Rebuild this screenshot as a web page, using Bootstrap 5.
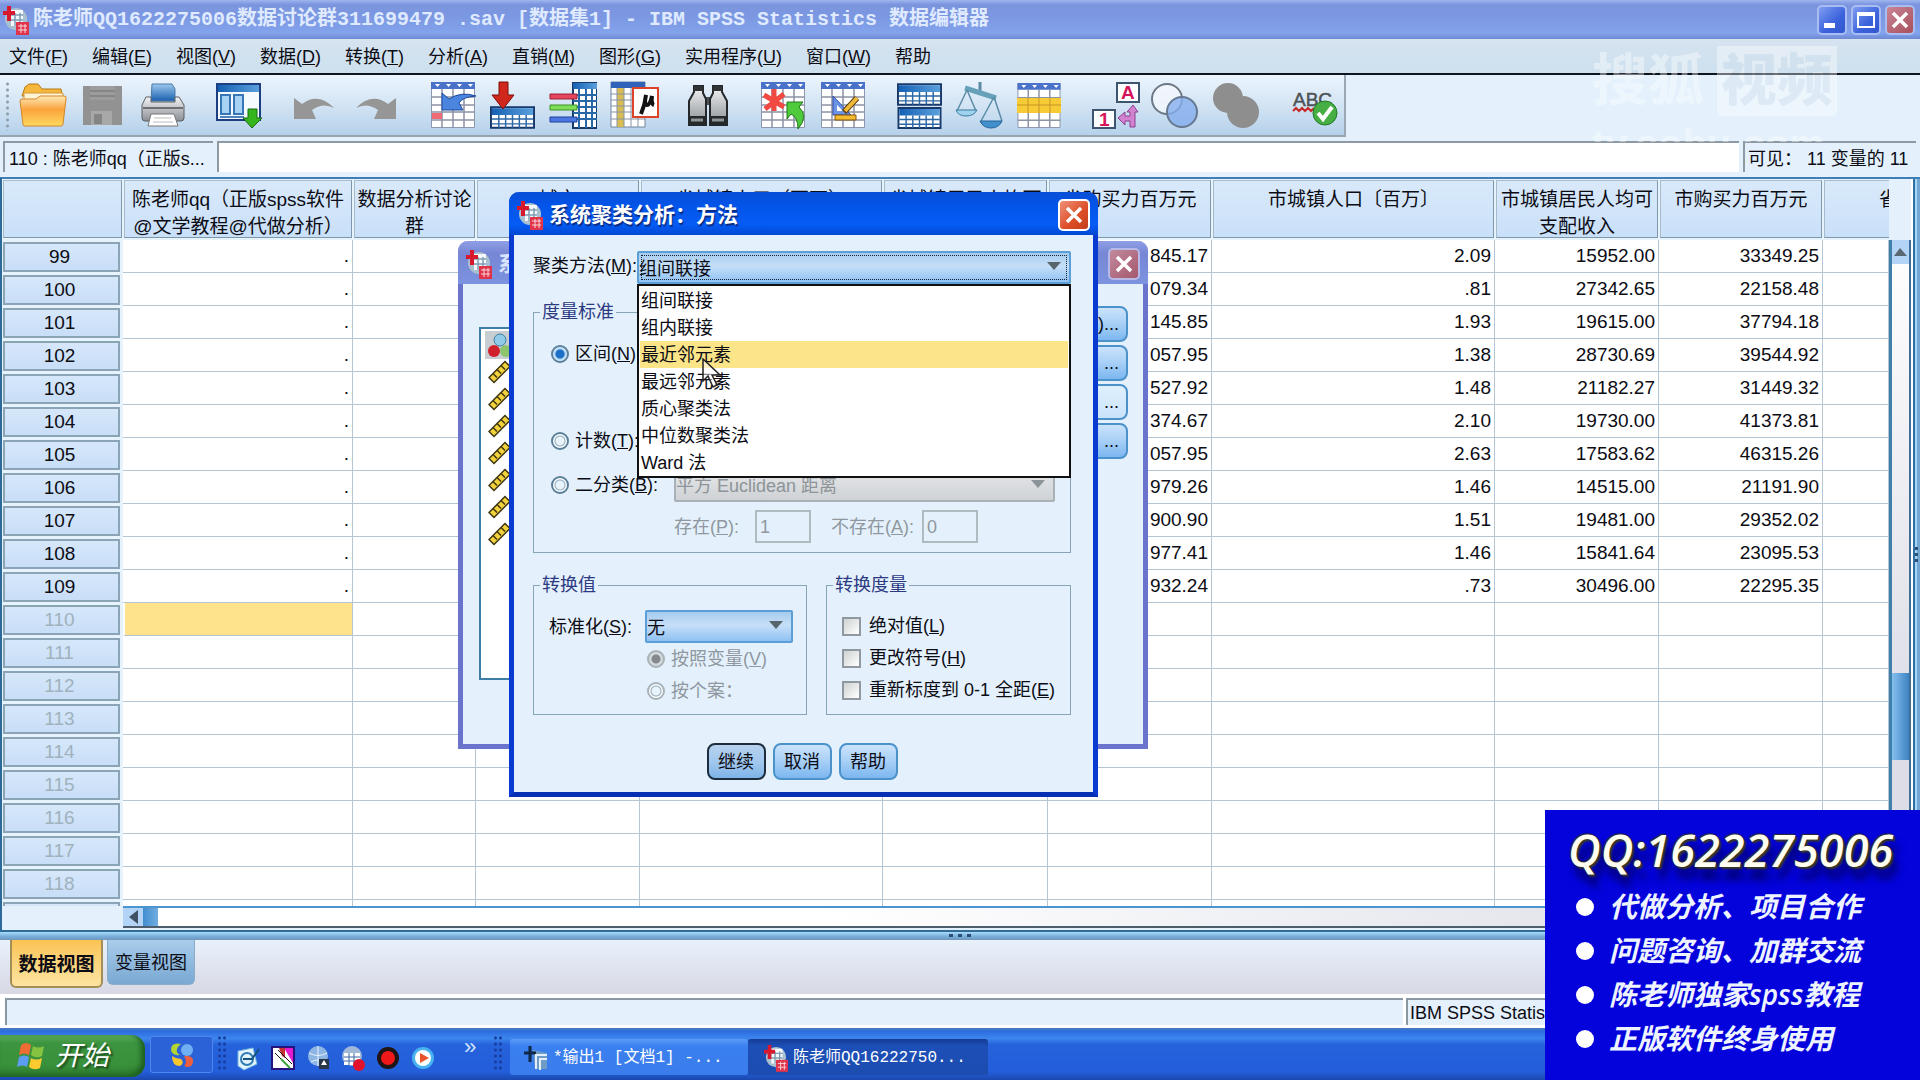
<!DOCTYPE html>
<html lang="zh-CN">
<head>
<meta charset="utf-8">
<meta name="viewport" content="width=device-width, initial-scale=1">
<title>IBM SPSS Statistics 数据编辑器</title>
<link rel="stylesheet" href="https://cdn.jsdelivr.net/npm/bootstrap@5.3.0/dist/css/bootstrap.min.css">
<style>
  :root { --pane:#e4f1fc; --line:#b4c6d3; --cell:#cfe3f9; --ui:"Liberation Sans","Noto Sans CJK SC",sans-serif; --mono:"Liberation Mono","Noto Sans CJK SC",monospace; }
  body { font-family:var(--ui); font-size:18px; line-height:24px; color:#0c0c14; background:var(--pane); height:100vh; overflow:hidden; white-space:nowrap; }
  button, input, select { font:inherit; color:inherit; }
  svg { display:block; flex:none; }

  .win-title { height:39px; background:linear-gradient(#9fb6ef 0,#7b94de 12%,#7c98e2 45%,#83a3ec 85%,#6d89d2); color:#dfeaff; font-family:var(--mono); font-size:20px; font-weight:700; padding:0 5px 0 3px; }
  .win-btn { width:30px; height:30px; padding:0; border:2px solid #a9bdf3; border-radius:5px; background:linear-gradient(135deg,#7f9df0,#3a62dc 60%,#3258cf); display:grid; place-items:center; }
  .win-close { background:linear-gradient(135deg,#c88595,#a9505c); }
  .menu-bar { height:36px; background:linear-gradient(#d6e3f0,#cde0ee); border-bottom:2px solid #10141c; padding:2px 9px 0; gap:24px; }
  .menu-bar a { color:#0c0c14; text-decoration:none; }
  .tool-strip { height:62px; width:1346px; max-width:100%; gap:28px; padding-left:19px; background:linear-gradient(#ecf5fe,#d3e4f4 50%,#b5d1ea); border-right:2px solid #9aa8b2; border-bottom:2px solid #97a5af; position:relative; }
  .tool-strip::before { content:""; position:absolute; left:6px; top:6px; bottom:4px; width:3px; background:radial-gradient(circle,#8fa0ad 1px,transparent 2px) 0 0/3px 6px; }
  .tool-group { gap:12px; }
  .tool-group button { width:48px; height:48px; padding:0; border:0; background:none; }
  .cell-line { height:31px; margin:4px 4px 5px 3px; gap:4px; }
  .cell-line > * { border:0; border-top:2px solid #8d9aa4; border-left:2px solid #8d9aa4; border-radius:0; }
  .cell-name { width:210px; padding:4px 0 0 4px; }
  .cell-edit { background:#fff; outline:0; }
  .cell-count { width:173px; padding:4px 0 0 3px; }

  .grid-area { border-top:2px solid #3f7fb5; border-left:2px solid #2b6a9a; }
  .data-grid { table-layout:fixed; width:100%; border-collapse:separate; border-spacing:0; font-size:19px; line-height:27px; background:#fff; }
  .data-grid th { font-weight:400; text-align:center; padding:1px; background:#e6f2fc; }
  .data-grid thead th { height:61px; vertical-align:top; overflow:hidden; }
  .th-box { height:58px; border:1px solid #7f98a9; border-top-color:#a7bccb; border-left-color:#a7bccb; background:linear-gradient(#d9e9fa,#c9e0f9); padding-top:5px; overflow:hidden; }
  .th-last { padding-left:54px; text-align:left; margin-right:-1px; border-right:0; }
  .data-grid tbody tr { height:33px; }
  .data-grid td { height:33px; padding:0 3px; text-align:right; border-right:1px solid var(--line); border-bottom:1px solid var(--line); line-height:32px; overflow:hidden; }
  .row-box { height:30px; border:2px solid #8ba5b7; background:linear-gradient(#d6e7fa,#c8def7); line-height:26px; margin-right:2px; padding-right:4px; }
  .row-idle { color:#9fb2bd; }
  .data-grid .picked { background:#fee38c; background-clip:padding-box; border-left:2px solid #fff; }
  .h-scroll { height:22px; margin:0 0 2px 121px; border-top:2px solid #4a94d0; border-bottom:2px solid #4c5e6c; background:linear-gradient(90deg,#fff 40%,#d9dbe4); }
  .v-scroll { width:22px; margin-top:61px; border-left:3px solid #3f7fa9; border-right:2px solid #3f6f99; background:linear-gradient(#fff,#dcdde6 70%); }
  .scroll-arrow { width:20px; background:#b3d4f7; display:grid; place-items:center; border:0; padding:0; }
  .h-thumb { width:15px; background:linear-gradient(90deg,#3f8dd0,#74aee0); }
  .v-thumb { height:87px; background:linear-gradient(90deg,#86c0ef,#3d82c0); }
  .v-before { flex:12 0 0; }
  .v-after { flex:5 0 0; }
  .v-split { width:9px; background:linear-gradient(90deg,#fff 0 2px,#2f6ea0 2px 4px,#a6d7f8 4px 6px,#72a7d4 6px); display:grid; place-items:center; }
  .h-split { height:10px; border-top:2px solid #2f6c98; background:linear-gradient(#a9dcfa,#77aedb 55%,#7196bb); }
  .tab-strip { height:54px; background:linear-gradient(#e8f1fb,#d7d8e4); padding-left:10px; gap:4px; }
  .sheet-tab { border:1px solid #8bacc9; border-top:0; border-radius:0 0 6px 6px; font-size:18px; padding:1px 0 0; width:88px; height:45px; background:linear-gradient(#a9cdeb,#79a8d3); }
  .sheet-now { width:93px; height:48px; border:2px solid #a48e58; border-top:0; background:linear-gradient(#fac353,#fcd57e 50%,#fde49e); font-weight:700; font-size:19px; padding-top:4px; }
  .status-strip { height:34px; background:#fff; padding:4px 0 3px 5px; gap:3px; }
  .status-strip > div { border-top:2px solid #8a98a3; border-left:2px solid #8a98a3; background:var(--pane); padding:1px 0 0 2px; }
  .status-right { width:514px; }

  .task-bar { height:52px; background:linear-gradient(#4a7dbb 0,#2c6de0 6%,#3d86ee 20%,#2562db 32%,#245edb 84%,#1a48ae); color:#fff; font-family:var(--mono); font-size:16px; padding-top:7px; }
  .start-btn { width:145px; height:42px; border:0; border-radius:0 14px 14px 0; background:linear-gradient(#5cab5a,#3c9440 20%,#39913b 70%,#2b7a2d); box-shadow:inset -4px -2px 5px #1e5e22; color:#fff; font:italic 27px/36px "Liberation Sans","Noto Sans CJK SC",sans-serif; text-shadow:2px 2px 2px #1d4a1d; padding:0 0 0 16px; gap:9px; }
  .quick-main { width:63px; height:37px; border:1px solid #4f85ee; border-radius:3px; background:#2b62d8; margin:1px 4px 0 5px; padding:0; display:grid; place-items:center; }
  .grip { width:9px; height:36px; background:radial-gradient(circle,#173f9f 1px,transparent 2px) 0 0/5px 6px; }
  .quick-row { gap:11px; padding:0 10px 0 10px; width:267px; }
  .quick-row button, .more { border:0; background:none; padding:0; color:#cfe0ff; }
  .quick-row .more { margin:-18px 0 0 auto; font-size:22px; padding-right:6px; }
  .task-btn { height:36px; width:238px; margin-top:4px; border:0; border-radius:3px; color:#fff; background:linear-gradient(#5b9bf8,#3b80f0 20%,#3a7cec); padding:2px 0 0 14px; gap:5px; }
  .task-now { background:linear-gradient(#153c94,#1d4fb8 20%,#1c4cae); width:240px; padding-left:16px; }

  .dlg { position:absolute; z-index:5; border:5px solid #6b74cc; border-top:0; border-radius:10px 10px 0 0; background:var(--pane); }
  .dlg-head { height:43px; margin:0 -5px; padding:2px 8px 0 8px; border-radius:10px 10px 0 0; background:linear-gradient(#8f9ee5,#7686d4 30%,#7c93e0); color:#dbe4ff; font-weight:700; font-size:21px; gap:6px; }
  .dlg-back { left:458px; top:241px; width:690px; height:508px; }
  .dlg-front { left:509px; top:192px; width:589px; height:605px; border-color:#0a3bd0; border-bottom-color:#0530b4; z-index:6; }
  .dlg-front .dlg-head { background:linear-gradient(#0a4fd6,#0353e6 25%,#055cf6 75%,#0148d2); color:#fff; text-shadow:1px 2px 1px #0a2a80; }
  .dlg-x { width:32px; height:32px; padding:0; border:2px solid #fff; border-radius:5px; background:linear-gradient(135deg,#f0917a,#dc4c26 60%,#c23e1c); display:grid; place-items:center; }
  .dlg-back .dlg-x { border-color:#b7b9e8; background:linear-gradient(135deg,#c28a9e,#a4586c); }
  .var-list { width:300px; height:353px; margin:43px 0 0 16px; background:#fff; border:2px solid #3d7ea8; padding:2px 4px; }
  .side-btns { margin:22px 15px 0 0; gap:3px; }
  .pill { height:36px; border:2px solid #4b92cb; border-radius:8px; background:linear-gradient(#cbe3fb,#a7cff6 50%,#7cb7f0); padding:0; text-align:center; }
  .side-btns .pill { width:100px; text-align:right; padding-right:7px; }
  .side-btns .pill:nth-child(3) { background:linear-gradient(#e0f0fd,#c9e3fb); }
  .dlg-body { padding:16px 22px 0 19px; }
  .pick { appearance:none; border:2px solid #5b9fd6; border-radius:2px; height:33px; padding:2px 0 0; background:linear-gradient(#a6cbee,#c6dff8 45%,#8fc2f3); }
  .pick-wrap { position:relative; }
  .pick-wrap .caret { position:absolute; right:10px; top:10px; pointer-events:none; }
  .pick-main { outline:1px dotted #123; outline-offset:-5px; }
  .pick:disabled { color:#8d9499; border-color:#a9b1b6; background:linear-gradient(#e4e6e8,#cfd2d5); opacity:1; }
  .drop { position:absolute; left:0; right:0; top:33px; z-index:3; background:#fff; border:2px solid #111; padding:1px 1px 0; margin:0; list-style:none; }
  .drop li { height:27px; line-height:28px; padding-left:1px; }
  .drop .hot { background:#fce588; }
  .box { border:1px solid #86a6b8; margin:0; padding:0 15px; min-width:0; }
  .box legend { float:none; width:auto; font-size:18px; line-height:24px; margin:0 0 0 -9px; padding:0 2px; color:#2c3a82; }
  .box-metric { height:253px; }
  .box-low { height:142px; }
  .box-std { width:274px; padding-right:13px; }
  .std-col { width:148px; }
  .gap-head { margin-top:14px; }
  .gap-low { margin-top:13px; }
  .gap-open { height:47px; }
  .dlg input[type=radio] { appearance:none; width:18px; height:18px; border:2px solid #5a7f9a; border-radius:50%; margin:0 6px 0 2px; flex:none; background:radial-gradient(circle,#e8f3fc 4px,#8fa9ba 5px,#fff 6px); }
  .dlg input[type=radio]:checked { background:radial-gradient(circle,#1c6fc4 4px,#9ccdf5 5px,#e8f5ff 7px); }
  .dlg input[type=radio]:disabled { border-color:#a7b1b8; }
  .dlg input[type=radio]:disabled:checked { background:radial-gradient(circle,#84898e 4px,#d3d8dc 5px); }
  .dlg input[type=checkbox] { appearance:none; width:19px; height:19px; border:2px solid #8f999f; background:linear-gradient(135deg,#cfd2d3,#fff); margin:0 8px 0 0; flex:none; }
  .line-32 { height:32px; }
  .dim { color:#8f989f; }
  .num { width:56px; height:33px; border:2px solid #b0bac1; background:var(--pane); padding:2px 3px 0; border-radius:0; }
  .foot { gap:7px; margin-top:28px; }
  .foot .pill { width:59px; height:37px; }
  .foot .go { border-color:#1d2d3d; background:linear-gradient(#b7d2ee,#a2c8ee 50%,#7fb4e8); }
  .cursor { position:absolute; left:65px; top:107px; z-index:4; pointer-events:none; }

  .ad { position:absolute; right:0; bottom:0; z-index:8; width:375px; height:270px; background:#0403dc; color:#fff; font-style:italic; padding:12px 0 0 23px; }
  .ad strong { display:block; font:italic 600 45px/56px "Open Sans","Noto Sans",sans-serif; color:#fffef0; text-shadow:0 0 2px #222,2px 2px 2px #3d3d22,-1px -1px 1px #333,5px 12px 8px #000058; }
  .ad ul { list-style:none; margin:6px 0 0 8px; padding:0; font:italic 600 28px/44px "Open Sans","Noto Sans CJK SC",sans-serif; color:#eef4ff; }
  .ad li { display:flex; align-items:center; gap:15px; height:44px; }
  .ad li::before { content:""; width:18px; height:18px; border-radius:50%; background:#fff; margin-top:2px; }
  .tv-mark { position:absolute; right:80px; top:46px; width:248px; height:96px; z-index:4; overflow:hidden; pointer-events:none; color:#fff; opacity:.4; font:700 56px/60px "Noto Sans CJK SC",sans-serif; }
  .tv-mark b { background:#fff; color:#d3e2ef; border-radius:5px; padding:0 4px; }
  .tv-mark p { font:700 40px/44px var(--ui); margin:16px 0 0; }
</style>
</head>
<body class="d-flex flex-column">

<svg width="0" height="0" class="position-absolute" aria-hidden="true">
  <linearGradient id="gB" x2="0" y2="1"><stop stop-color="#9cc8ee"/><stop offset="1" stop-color="#1a5fae"/></linearGradient>
  <linearGradient id="gH"><stop stop-color="#1560b4"/><stop offset="1" stop-color="#5ba0dc"/></linearGradient>
  <linearGradient id="gO" x2="0" y2="1"><stop stop-color="#ffe9b8"/><stop offset=".45" stop-color="#f9a43c"/><stop offset="1" stop-color="#ffd95e"/></linearGradient>
  <linearGradient id="gS" x2="0" y2="1"><stop stop-color="#f2f3f4"/><stop offset="1" stop-color="#8b8f94"/></linearGradient>
  <symbol id="app" viewBox="0 0 26 30">
    <circle cx="13" cy="14" r="11" fill="#a9c0d0"/><path d="M8 5h12v16H8z" fill="#f5f8fb"/><path d="M8 10h12M8 15h12M12 8v13M17 8v13" stroke="#7f9db4" stroke-width="1.5"/>
    <path d="M6 1v15M0 8h12" stroke="#d8182c" stroke-width="4"/><path d="M13 17h13v13H13z" fill="#e0344a"/><path d="M15 21h9M15 25h9M18 19v9M22 19v9" stroke="#fbd5da" stroke-width="1"/>
  </symbol>
  <symbol id="sheet" viewBox="0 0 44 46"><path d="M.5.5h43v45H.5z" fill="#fff" stroke="#8d98b0"/><path d="M0 0h44v7H0z" fill="#4a72c8"/><path d="M4 2h5l-2.500 3zM15 2h5l-2.500 3zM26 2h5l-2.500 3zM37 2h5l-2.500 3z" fill="#fff"/><path d="M0 15h44M0 23h44M0 30h44M0 38h44M11 7v39M22 7v39M33 7v39" stroke="#8d93a5" stroke-width="1.500"/></symbol>
  <symbol id="tbl" viewBox="0 0 46 23"><path d="M1 1h44v21H1z" fill="#fff" stroke="#17396c" stroke-width="2"/><path d="M2 2h42v7H2z" fill="url(#gH)"/><path d="M2 13h42M2 18h42M9 9v13M16 9v13M23 9v13M30 9v13M37 9v13" stroke="#2b67a5" stroke-width="1.500"/></symbol>
  <symbol id="x" viewBox="0 0 20 20"><path d="M3 3l14 14M17 3L3 17" stroke="#fff" stroke-width="3.500"/></symbol>
  <symbol id="arrow" viewBox="0 0 14 9"><path d="M0 1h14L7 9z" fill="#59656d"/></symbol>
  <symbol id="rule" viewBox="0 0 24 24"><path d="M1 18L17 2l5 5L6 23z" fill="#f3d23c" stroke="#3e3510" stroke-width="1.500"/><path d="M5 14l4 4M9 10l4 4M13 6l4 4" stroke="#3e3510" stroke-width="1.500"/></symbol>
</svg>

<header class="win-title d-flex align-items-center flex-shrink-0">
  <svg width="26" height="30" class="me-1"><use href="#app"/></svg>
  <span class="me-auto">陈老师QQ1622275006数据讨论群311699479 .sav [数据集1] - IBM SPSS Statistics 数据编辑器</span>
  <div class="d-flex gap-1">
    <button class="win-btn" aria-label="最小化"><svg width="20" height="20"><path d="M2 13h11v5H2z" fill="#fff"/></svg></button>
    <button class="win-btn" aria-label="最大化"><svg width="20" height="20"><path d="M2 3h16v14H2z" fill="none" stroke="#fff" stroke-width="2"/><path d="M1 2h18v4H1z" fill="#fff"/></svg></button>
    <button class="win-btn win-close" aria-label="关闭"><svg width="20" height="20"><use href="#x"/></svg></button>
  </div>
</header>

<nav class="menu-bar d-flex align-items-center flex-shrink-0">
  <a href="#">文件(<u>F</u>)</a><a href="#">编辑(<u>E</u>)</a><a href="#">视图(<u>V</u>)</a><a href="#">数据(<u>D</u>)</a><a href="#">转换(<u>T</u>)</a><a href="#">分析(<u>A</u>)</a><a href="#">直销(<u>M</u>)</a><a href="#">图形(<u>G</u>)</a><a href="#">实用程序(<u>U</u>)</a><a href="#">窗口(<u>W</u>)</a><a href="#">帮助</a>
</nav>

<div class="tool-strip d-flex align-items-center flex-shrink-0">
  <div class="tool-group d-flex">
    <button aria-label="打开"><svg width="48" height="48"><path d="M4 12l2-6 4-3h9l4 5h19l1 7H3z" fill="#f6b73d" stroke="#b8790f"/><path d="M5 12h39v10H5z" fill="#fff3d6" stroke="#d39a3a"/><path d="M1 20q0-2 2-2h14l4-3h24q3 0 2 3l-3 25q0 2-2 2H6q-2 0-2-2z" fill="url(#gO)" stroke="#d4862a"/></svg></button>
    <button aria-label="保存"><svg width="48" height="48"><path d="M4 5h39v39H4z" fill="#929292"/><path d="M11 5h25v14H11z" fill="#9c9c9c"/><path d="M11 10h25M11 15h25" stroke="#868686" stroke-width="2"/><path d="M12 30h21v14H12z" fill="#a8a8a8"/><path d="M15 33h8v10h-8z" fill="#858585"/></svg></button>
    <button aria-label="打印"><svg width="48" height="48"><path d="M13 3h20l3 5v12H12z" fill="url(#gB)" stroke="#4a7ba8"/><path d="M7 16l5 0v5h24v-5h4l5 8v13q0 3-3 3H6q-3 0-3-3V24z" fill="url(#gS)" stroke="#5b5e62"/><path d="M4 27h40" stroke="#6c7075" stroke-width="2"/><path d="M12 33h23l4 12H9z" fill="#fff" stroke="#777"/><path d="M15 37h17M14 41h20" stroke="#bbb"/></svg></button>
  </div>
  <div class="tool-group d-flex">
    <button aria-label="调用对话框"><svg width="48" height="48"><path d="M2 3h43v36H2z" fill="#f5faff" stroke="#1c3f82" stroke-width="2"/><path d="M3 4h41v7H3z" fill="url(#gH)"/><path d="M6 14h9v19H6zM19 14h9v19h-9z" fill="#a6d3f3" stroke="#3777b7" stroke-width="2"/><path d="M5 36h24" stroke="#4f83bd" stroke-width="2"/><path d="M33 28h9v9h5l-10 10-9-10h5z" fill="#35b51e" stroke="#176a10"/></svg></button>
  </div>
  <div class="tool-group d-flex">
    <button aria-label="撤销"><svg width="48" height="48"><path d="M3 17l8 6q16-12 32 4-11-6-22 2l4 9H3z" fill="#969696"/></svg></button>
    <button aria-label="重做"><svg width="48" height="48"><path d="M45 17l-8 6q-16-12-32 4 11-6 22 2l-4 9h22z" fill="#969696"/></svg></button>
  </div>
  <div class="tool-group d-flex">
    <button aria-label="转到个案"><svg width="50" height="48"><use href="#sheet" x="4" y="1" width="44" height="46"/><path d="M5 32h10v6H5z" fill="#ee6b74"/><path d="M15 12l7 6q12-8 27-3-14 1-17 7l4 7H15z" fill="#4c85e0" stroke="#1c4a9c"/></svg></button>
    <button aria-label="转到变量"><svg width="48" height="48"><use href="#tbl" x="3" y="25" width="45" height="23"/><path d="M12 1h9v13h6L16 28 5 14h7z" fill="#d0271c" stroke="#7c0f0c"/></svg></button>
    <button aria-label="变量"><svg width="50" height="48"><path d="M26 2h24v45H26z" fill="#fff" stroke="#17396c" stroke-width="2"/><path d="M26 2h24v6H26z" fill="url(#gH)"/><path d="M26 14h24M26 20h24M26 26h24M26 32h24M26 38h24M32 8v39M39 8v39M45 8v39" stroke="#2868a8" stroke-width="2"/><path d="M3 13h27v5H3z" fill="#e6455c" stroke="#9c2038"/><path d="M3 24h27v5H3z" fill="#7fdc58" stroke="#3b9427"/><path d="M3 36h27v5H3z" fill="#4b78e0" stroke="#1e3f9c"/></svg></button>
    <button aria-label="运行描述统计"><svg width="54" height="48" overflow="visible"><path d="M4 1h34v45H4z" fill="#fff" stroke="#71839c"/><path d="M4 1h34v6H4z" fill="#2f62b8"/><path d="M10 7h7v39h-7z" fill="#d9bd53"/><path d="M4 13h34M4 19h34M4 25h34M4 31h34M4 38h34M10 7v39M17 7v39M24 7v39M31 7v39" stroke="#8793a4"/><path d="M26 7h25v29H26z" fill="#fff" stroke="#dd4328" stroke-width="2"/><path d="M34 33q4-9 5-19-2 9 1 10 3 0 5-9-1 8 2 9" fill="none" stroke="#111" stroke-width="4"/></svg></button>
  </div>
  <div class="tool-group d-flex">
    <button aria-label="查找"><svg width="48" height="48"><path d="M18 16h14v8H18z" fill="#4d5155"/><path d="M11 5h9v7l3 6v26H6V20l5-9zM30 5h9v6l5 9v24H27V18l3-6z" fill="url(#gS)" stroke="#25282b" stroke-width="2"/><path d="M6 35h17v9H6zM27 35h17v9H27z" fill="#26292c"/><path d="M11 5h9v5h-9zM30 5h9v5h-9z" fill="#303336"/><path d="M8 39h12M29 39h12" stroke="#8e9398" stroke-width="3"/></svg></button>
  </div>
  <div class="tool-group d-flex">
    <button aria-label="插入个案"><svg width="48" height="48"><use href="#sheet" x="2" y="1" width="44" height="46"/><path d="M15 8v22M5 14l20 12M25 13L6 28" stroke="#f04a42" stroke-width="5"/><path d="M28 21h16l-4 5q10 9-1 22 0-12-7-15l-4 5z" fill="#4fca3c" stroke="#217a1a"/></svg></button>
    <button aria-label="插入变量"><svg width="48" height="48"><use href="#sheet" x="2" y="1" width="44" height="46"/><path d="M14 15v19h18z" fill="#6b93e8" stroke="#2b4fa8"/><path d="M18 24v6h6z" fill="#fff"/><path d="M38 17L25 31" stroke="#5c3d10" stroke-width="6"/><path d="M38 17L26 30" stroke="#f0b93a" stroke-width="4"/><path d="M16 34h21v5H16z" fill="#f5bb2e" stroke="#86530c"/></svg></button>
  </div>
  <div class="tool-group d-flex">
    <button aria-label="拆分文件"><svg width="48" height="48"><use href="#tbl" x="2" y="2" width="45" height="23"/><use href="#tbl" x="2" y="26" width="45" height="22"/></svg></button>
    <button aria-label="加权个案"><svg width="48" height="48"><path d="M25 1v13" stroke="#5d8ba4" stroke-width="3"/><path d="M10 7l31 10" stroke="#67a1b9" stroke-width="5"/><path d="M12 9L2 30M12 9l9 21M39 16L26 40M39 16l8 24" stroke="#5a8ca8" stroke-width="1.500"/><path d="M1 29h21q-3 6-11 6T1 29z" fill="#9ed2ef" stroke="#37789c"/><path d="M25 40h22q-3 7-11 7t-11-7z" fill="#418fcc" stroke="#23659c"/></svg></button>
    <button aria-label="选择个案"><svg width="48" height="48"><use href="#sheet" x="2" y="2" width="44" height="45"/><path d="M2 17h44v15H2z" fill="#f7cb35"/><path d="M2 24h44M13 17v15M24 17v15M35 17v15" stroke="#c3952a"/></svg></button>
  </div>
  <div class="tool-group d-flex">
    <button aria-label="值标签"><svg width="50" height="48"><path d="M26 2h22v19H26zM2 29h22v18H2z" fill="#fff" stroke="#3d556f" stroke-width="2"/><text x="30" y="18" font-family="Liberation Sans" font-weight="700" font-size="19" fill="#d6145c">A</text><text x="8" y="45" font-family="Liberation Sans" font-weight="700" font-size="19" fill="#d6145c">1</text><path d="M42 24l5 7h-3v15h-5v-6h-5v4l-7-7 7-6v4h5v-4h-3z" fill="#d282cf" stroke="#8a4090"/></svg></button>
    <button aria-label="使用变量集"><svg width="48" height="48"><circle cx="16" cy="18" r="15" fill="#f4f8fd" fill-opacity=".8" stroke="#6c7885" stroke-width="2"/><circle cx="31" cy="31" r="15" fill="#85aeee" fill-opacity=".8" stroke="#66788f" stroke-width="2"/></svg></button>
    <button aria-label="显示所有变量"><svg width="50" height="48"><g fill="#8e8e8e"><circle cx="17" cy="17" r="15"/><circle cx="32" cy="31" r="16"/></g></svg></button>
  </div>
  <div class="tool-group d-flex">
    <button aria-label="拼写检查"><svg width="54" height="48" overflow="visible"><text x="6" y="25" font-family="Liberation Sans" font-size="19" fill="#4e5357" stroke="#4e5357" stroke-width=".5">ABC</text><path d="M6 30l3-3 3 3 3-3 3 3 3-3 3 3 3-3" fill="none" stroke="#c72a2a" stroke-width="2"/><circle cx="38" cy="32" r="12" fill="#46ae42" stroke="#217a26"/><path d="M31 32l5 6 9-12" fill="none" stroke="#fff" stroke-width="4"/></svg></button>
  </div>
</div>

<div class="cell-line d-flex flex-shrink-0">
  <div class="cell-name">110 : 陈老师qq（正版s...</div>
  <input class="cell-edit flex-fill" aria-label="单元格编辑器">
  <div class="cell-count">可见： 11 变量的 11</div>
</div>

<main class="grid-area d-flex flex-fill overflow-hidden">
  <div class="d-flex flex-column flex-fill overflow-hidden">
    <div class="flex-fill overflow-hidden">
      <table class="data-grid">
        <colgroup><col width="121"><col width="230"><col width="123"><col width="164"><col width="243"><col width="165"><col width="164"><col width="283"><col width="164"><col width="164"><col></colgroup>
        <thead><tr>
          <th><div class="th-box"></div></th>
          <th><div class="th-box">陈老师qq（正版spss软件<br>@文学教程@代做分析）</div></th>
          <th><div class="th-box">数据分析讨论<br>群</div></th>
          <th><div class="th-box">城市</div></th>
          <th><div class="th-box">省城镇人口（百万）</div></th>
          <th><div class="th-box">省城镇居民人均可</div></th>
          <th><div class="th-box">省购买力百万元</div></th>
          <th><div class="th-box">市城镇人口〔百万〕</div></th>
          <th><div class="th-box">市城镇居民人均可<br>支配收入</div></th>
          <th><div class="th-box">市购买力百万元</div></th>
          <th><div class="th-box th-last">省</div></th>
        </tr></thead>
        <tbody id="rows"></tbody>
      </table>
    </div>
    <div class="h-scroll d-flex flex-shrink-0"><button class="scroll-arrow" aria-label="向左"><svg width="9" height="14"><path d="M9 0v14L0 7z" fill="#3e5263"/></svg></button><div class="h-thumb"></div></div>
  </div>
  <div class="v-scroll d-flex flex-column flex-shrink-0">
    <button class="scroll-arrow w-100 py-2" aria-label="向上"><svg width="13" height="8"><path d="M0 8h13L6 0z" fill="#5a6873"/></svg></button>
    <div class="v-before"></div><div class="v-thumb"></div><div class="v-after"></div>
  </div>
  <div class="v-split flex-shrink-0"><svg width="4" height="16"><path d="M1 0h3v3H1zM1 6h3v3H1zM1 12h3v3H1z" fill="#2c4f74"/></svg></div>
</main>
<div class="h-split flex-shrink-0 d-flex justify-content-center"><svg width="22" height="8"><path d="M0 2h4v3H0zM9 2h4v3H9zM18 2h4v3h-4z" fill="#2c4f74"/></svg></div>

<div class="tab-strip d-flex flex-shrink-0">
  <button class="sheet-tab sheet-now">数据视图</button><button class="sheet-tab">变量视图</button>
</div>
<footer class="status-strip d-flex flex-shrink-0">
  <div class="flex-fill"></div><div class="status-right">IBM SPSS Statistics</div>
</footer>

<div class="task-bar d-flex flex-shrink-0">
  <button class="start-btn d-flex align-items-center"><svg width="30" height="30" viewBox="0 0 30 30"><path d="M5 4q5-4 10 0l-2 10q-5-3-10 0z" fill="#ef6c35"/><path d="M17 5q5 3 11 0l-2 10q-6 3-11-1z" fill="#86c440"/><path d="M3 16q5-3 10 0l-2 10q-5-3-10 0z" fill="#5c9cf2"/><path d="M15 17q5 3 11 0l-2 10q-6 3-11-1z" fill="#fccb2f"/></svg>开始</button>
  <button class="quick-main" aria-label="快捷方式"><svg width="26" height="26"><path d="M12 2Q2 0 2 8q1 6 9 5-4-2-3-6 1-3 4-5z" fill="#b3d534"/><circle cx="18" cy="8" r="6" fill="#6fb0f5"/><path d="M3 14q0 10 8 10 5-3 1-7-5 0-9-3z" fill="#f8c52d"/><path d="M15 14q10-1 9 6t-9 4q4-4 0-10z" fill="#ee5f3f"/></svg></button>
  <div class="grip"></div>
  <div class="quick-row d-flex align-items-center">
    <button aria-label="浏览器"><svg width="24" height="26"><path d="M2 6l15-3 4 16-13 6-6-4z" fill="#e4f3fb" stroke="#6fb6dd"/><circle cx="11" cy="14" r="6" fill="none" stroke="#2f7db5" stroke-width="2"/><path d="M7 14h9L23 4" stroke="#16527f" stroke-width="2" fill="none"/></svg></button>
    <button aria-label="画图"><svg width="24" height="26"><path d="M1 2h22v22H1z" fill="#fff" stroke="#26127c" stroke-width="2"/><path d="M13 3h9v15z" fill="#e31bd0"/><path d="M8 3h6v10l-3-2z" fill="#c53030"/><path d="M4 8l14 14M7 5l14 14" stroke="#151515"/><path d="M10 14l9 9" stroke="#38a838" stroke-width="2"/></svg></button>
    <button aria-label="网络"><svg width="24" height="26"><circle cx="12" cy="11" r="10" fill="#8eb6e5"/><path d="M3 8q9 5 18 0M5 17q7-4 13 0M12 1v20" stroke="#e8f1fc" fill="none"/><path d="M13 14h10v10H13z" fill="#293848"/><path d="M15 20l3-5 3 5z" fill="#fff"/></svg></button>
    <button aria-label="日程"><svg width="24" height="26"><circle cx="11" cy="11" r="10" fill="#9fb8d8"/><path d="M3 8h16v12H3z" fill="#fff"/><path d="M3 12h16M3 16h16M8 8v12M13 8v12" stroke="#3f69a8"/><circle cx="18" cy="20" r="6" fill="#e3122c"/></svg></button>
    <button aria-label="录制"><svg width="24" height="26"><circle cx="12" cy="13" r="11" fill="#201414"/><circle cx="12" cy="13" r="7" fill="#f01818"/></svg></button>
    <button aria-label="播放器"><svg width="24" height="26"><circle cx="12" cy="13" r="11" fill="#47b2ef"/><circle cx="12" cy="13" r="8" fill="#fff"/><path d="M9 8l9 5-9 5z" fill="#e8542b"/></svg></button>
    <button class="more" aria-label="更多">»</button>
  </div>
  <div class="grip me-2"></div>
  <button class="task-btn d-flex align-items-center"><svg width="24" height="26"><path d="M9 5l14 3v16H11z" fill="#6e9cc4"/><path d="M6 1v16M0 8h12" stroke="#102848" stroke-width="3"/><path d="M12 24V10h11M16 25V14h7" stroke="#e2effa" stroke-width="2" fill="none"/></svg>*输出1 [文档1] -...</button>
  <button class="task-btn task-now d-flex align-items-center"><svg width="24" height="28"><use href="#app"/></svg>陈老师QQ16222750...</button>
</div>

<section class="dlg dlg-back">
  <div class="dlg-head d-flex align-items-center"><svg width="26" height="30"><use href="#app"/></svg><span class="me-auto">系</span><button class="dlg-x" aria-label="关闭"><svg width="20" height="20"><use href="#x"/></svg></button></div>
  <div class="d-flex justify-content-between align-items-start">
    <div class="var-list">
      <svg width="26" height="28"><path d="M0 0h26v28H0z" fill="#c8cdd2"/><circle cx="15" cy="9" r="6" fill="#8fcbe8" stroke="#3d7fa3"/><circle cx="9" cy="20" r="6" fill="#d0202c"/><circle cx="21" cy="20" r="6" fill="#8ec46c"/></svg>
      <svg width="28" height="27"><use href="#rule" x="3" width="24" height="25"/></svg><svg width="28" height="27"><use href="#rule" x="3" width="24" height="25"/></svg><svg width="28" height="27"><use href="#rule" x="3" width="24" height="25"/></svg><svg width="28" height="27"><use href="#rule" x="3" width="24" height="25"/></svg><svg width="28" height="27"><use href="#rule" x="3" width="24" height="25"/></svg><svg width="28" height="27"><use href="#rule" x="3" width="24" height="25"/></svg><svg width="28" height="27"><use href="#rule" x="3" width="24" height="25"/></svg>
    </div>
    <div class="side-btns d-flex flex-column"><button class="pill">)...</button><button class="pill">...</button><button class="pill">...</button><button class="pill">...</button></div>
  </div>
</section>

<section class="dlg dlg-front" role="dialog" aria-label="系统聚类分析：方法">
  <div class="dlg-head d-flex align-items-center"><svg width="26" height="30"><use href="#app"/></svg><span class="me-auto">系统聚类分析：方法</span><button class="dlg-x" aria-label="关闭"><svg width="20" height="20"><use href="#x"/></svg></button></div>
  <form class="dlg-body">
    <div class="d-flex align-items-center">
      <label for="method" class="pb-1">聚类方法(<u>M</u>):</label>
      <div class="pick-wrap flex-fill">
        <select id="method" class="pick pick-main w-100"><option>组间联接</option></select>
        <svg class="caret" width="14" height="9"><use href="#arrow"/></svg>
        <ul class="drop" role="listbox"><li role="option">组间联接</li><li role="option">组内联接</li><li role="option" class="hot">最近邻元素</li><li role="option">最远邻元素</li><li role="option">质心聚类法</li><li role="option">中位数聚类法</li><li role="option">Ward 法</li></ul>
        <svg class="cursor" width="20" height="32"><path d="M1 1v22l5-5 5 11 4-2-5-10h8z" fill="#fff" fill-opacity=".5" stroke="#222" stroke-width="1.500"/></svg>
      </div>
    </div>
    <fieldset class="box box-metric mt-3">
      <legend>度量标准</legend>
      <div class="line-32 d-flex align-items-center gap-head"><input type="radio" name="m" id="r1" checked><label for="r1">区间(<u>N</u>)</label></div>
      <div class="gap-open"></div>
      <div class="line-32 d-flex align-items-center mt-2"><input type="radio" name="m" id="r2"><label for="r2">计数(<u>T</u>):</label></div>
      <div class="line-32 d-flex align-items-center mt-2 pt-2"><input type="radio" name="m" id="r3"><label for="r3">二分类(<u>B</u>):</label>
        <div class="pick-wrap flex-fill ms-3"><select class="pick w-100" disabled aria-label="二分类度量"><option>平方 Euclidean 距离</option></select><svg class="caret" width="14" height="9" opacity=".6"><use href="#arrow"/></svg></div></div>
      <div class="d-flex align-items-center dim gap-low ms-5"><label for="n1" class="ms-5 ps-4">&nbsp;存在(<u>P</u>):</label><input id="n1" class="num ms-3 me-3" value="1" disabled><label for="n2" class="ms-1">不存在(<u>A</u>):</label><input id="n2" class="num ms-2" value="0" disabled></div>
    </fieldset>
    <div class="d-flex mt-3 pt-1">
      <fieldset class="box box-low box-std me-auto">
        <legend>转换值</legend>
        <div class="d-flex align-items-center gap-low"><label for="std" class="me-auto">标准化(<u>S</u>):</label>
          <div class="pick-wrap std-col"><select id="std" class="pick w-100"><option>无</option></select><svg class="caret" width="14" height="9"><use href="#arrow"/></svg></div></div>
        <div class="d-flex justify-content-end"><div class="std-col dim">
          <div class="line-32 d-flex align-items-center"><input type="radio" id="v1" name="v" checked disabled><label for="v1">按照变量(<u>V</u>)</label></div>
          <div class="line-32 d-flex align-items-center"><input type="radio" id="v2" name="v" disabled><label for="v2">按个案：</label></div>
        </div></div>
      </fieldset>
      <fieldset class="box box-low">
        <legend>转换度量</legend>
        <div class="line-32 d-flex align-items-center gap-low"><input type="checkbox" id="c1"><label for="c1">绝对值(<u>L</u>)</label></div>
        <div class="line-32 d-flex align-items-center"><input type="checkbox" id="c2"><label for="c2">更改符号(<u>H</u>)</label></div>
        <div class="line-32 d-flex align-items-center"><input type="checkbox" id="c3"><label for="c3">重新标度到 0-1 全距(<u>E</u>)</label></div>
      </fieldset>
    </div>
    <div class="foot d-flex justify-content-center"><button type="button" class="pill go">继续</button><button type="button" class="pill">取消</button><button type="button" class="pill">帮助</button></div>
  </form>
</section>

<div class="tv-mark" aria-hidden="true">搜狐 <b>视频</b><p>tv.sohu.com</p></div>

<aside class="ad">
  <strong>QQ:1622275006</strong>
  <ul><li>代做分析、项目合作</li><li>问题咨询、加群交流</li><li>陈老师独家spss教程</li><li>正版软件终身使用</li></ul>
</aside>

<script src="https://cdn.jsdelivr.net/npm/bootstrap@5.3.0/dist/js/bootstrap.bundle.min.js"></script>
<script>
  // city cases: province purchasing power, city population, city income, city purchasing power
  const cases = {
    99:["845.17","2.09","15952.00","33349.25"], 100:["079.34",".81","27342.65","22158.48"], 101:["145.85","1.93","19615.00","37794.18"],
    102:["057.95","1.38","28730.69","39544.92"], 103:["527.92","1.48","21182.27","31449.32"], 104:["374.67","2.10","19730.00","41373.81"],
    105:["057.95","2.63","17583.62","46315.26"], 106:["979.26","1.46","14515.00","21191.90"], 107:["900.90","1.51","19481.00","29352.02"],
    108:["977.41","1.46","15841.64","23095.53"], 109:["932.24",".73","30496.00","22295.35"]
  };
  let html = "";
  for (let n = 99; n <= 119; n++) {
    const c = cases[n] || ["","","",""];
    html += `<tr><th scope="row"><div class="row-box${cases[n] ? "" : " row-idle"}">${n < 119 ? n : ""}</div></th>` +
      `<td${n === 110 ? ' class="picked"' : ""}>${cases[n] ? "." : ""}</td><td></td><td></td><td></td><td></td>` +
      c.map(v => `<td>${v}</td>`).join("") + "<td></td></tr>";
  }
  document.getElementById("rows").innerHTML = html;
</script>
</body>
</html>
